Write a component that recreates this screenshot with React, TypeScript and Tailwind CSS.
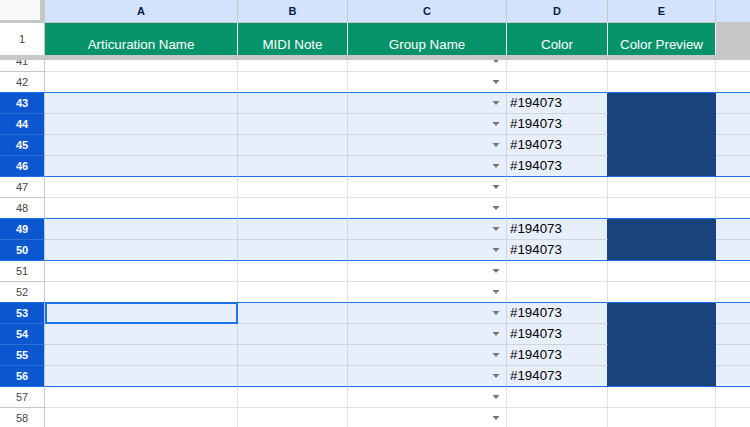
import React from "react";

const SEL = new Set([43, 44, 45, 46, 49, 50, 53, 54, 55, 56]);
const ROWS = Array.from({ length: 18 }, (_, i) => 41 + i);
const DARK = "#18437c";

function Arrow() {
  return (
    <svg width="8" height="4" viewBox="0 0 8 4" className="block">
      <polygon points="0.5,0 7.5,0 4,4" fill="#757575" />
    </svg>
  );
}

function Row({ n, first }: { n: number; first: boolean }) {
  const sel = SEL.has(n);
  const nextSel = SEL.has(n + 1);
  const edge = sel !== nextSel;
  const bottomColor = edge ? "#1a73e8" : sel ? "#ccd5e2" : "#e1e1e1";
  const vColor = sel ? "#ccd5e2" : "#e1e1e1";
  const bg = sel ? "#e7effd" : "#ffffff";
  const cellBase = "h-full border-r border-b";
  const isActive = n === 53;
  return (
    <div className={`flex h-[21px] shrink-0 ${first ? "-mt-[9px]" : ""}`}>
      <div
        className={`w-[45px] shrink-0 h-full border-r border-b flex items-center justify-center text-[11px] leading-none ${
          sel ? "bg-[#0b57d0] text-white font-bold" : "bg-white text-[#444746]"
        }`}
        style={{
          borderRightColor: "#c7c7c7",
          borderBottomColor: sel ? (edge ? "#1a73e8" : "#2f6fd6") : nextSel ? "#1a73e8" : "#c7c7c7",
        }}
      >
        {n}
      </div>
      <div
        className={`${cellBase} w-[193px] shrink-0 relative`}
        style={{ background: bg, borderRightColor: vColor, borderBottomColor: bottomColor }}
      >
        {isActive && (
          <div className="absolute -top-px left-0 -right-px -bottom-px border-2 border-[#1a73e8]" />
        )}
      </div>
      <div
        className={`${cellBase} w-[110px] shrink-0`}
        style={{ background: bg, borderRightColor: vColor, borderBottomColor: bottomColor }}
      />
      <div
        className={`${cellBase} w-[159px] shrink-0 flex items-center justify-end pr-[6px]`}
        style={{ background: bg, borderRightColor: vColor, borderBottomColor: bottomColor }}
      >
        <Arrow />
      </div>
      <div
        className={`${cellBase} w-[101px] shrink-0 pl-[3px] flex items-center text-[13.33px] leading-[20px] text-black`}
        style={{ background: bg, borderRightColor: sel ? DARK : vColor, borderBottomColor: bottomColor }}
      >
        {sel ? "#194073" : ""}
      </div>
      <div
        className={`${cellBase} w-[108px] shrink-0`}
        style={{
          background: sel ? DARK : bg,
          borderRightColor: sel ? DARK : vColor,
          borderBottomColor: sel && !edge ? DARK : bottomColor,
        }}
      />
      <div
        className="h-full flex-1 border-b"
        style={{ background: bg, borderBottomColor: bottomColor }}
      />
    </div>
  );
}

export default function App() {
  const cols: { w: string; letter: string; title: string }[] = [
    { w: "w-[193px]", letter: "A", title: "Articuration Name" },
    { w: "w-[110px]", letter: "B", title: "MIDI Note" },
    { w: "w-[159px]", letter: "C", title: "Group Name" },
    { w: "w-[101px]", letter: "D", title: "Color" },
    { w: "w-[108px]", letter: "E", title: "Color Preview" },
  ];
  return (
    <div
      className="w-[750px] h-[427px] overflow-hidden bg-white flex flex-col select-none"
      style={{ fontFamily: '"Liberation Sans", Arial, sans-serif' }}
    >
      {/* column letters */}
      <div className="flex h-[23px] shrink-0">
        <div className="w-[45px] shrink-0 h-full bg-[#f8f9fa] border-r-[5px] border-b-[3px] border-[#c7c7c7]" />
        {cols.map((c) => (
          <div
            key={c.letter}
            className={`${c.w} shrink-0 h-full bg-[#d3e3fd] border-r border-b border-[#c7c7c7] flex items-center justify-center text-[11px] font-bold text-[#041e49]`}
          >
            {c.letter}
          </div>
        ))}
        <div className="flex-1 h-full bg-[#d3e3fd] border-b border-[#c7c7c7]" />
      </div>
      {/* header row 1 */}
      <div className="flex h-[32px] shrink-0">
        <div className="w-[45px] shrink-0 h-full bg-white border-r border-[#c7c7c7] flex items-center justify-center text-[11px] text-[#444746]">
          1
        </div>
        {cols.map((c) => (
          <div
            key={c.letter}
            className={`${c.w} shrink-0 h-full bg-[#07936a] border-r border-white flex items-end justify-center pb-[2px] text-[13.33px] leading-[17px] text-white`}
          >
            {c.title}
          </div>
        ))}
        <div className="flex-1 h-full bg-[#c6c6c6]" />
      </div>
      {/* freeze bar */}
      <div className="h-[5px] shrink-0 bg-[#c7c7c7]" />
      {/* body */}
      <div className="flex-1 overflow-hidden flex flex-col">
        {ROWS.map((n, i) => (
          <Row key={n} n={n} first={i === 0} />
        ))}
      </div>
    </div>
  );
}
